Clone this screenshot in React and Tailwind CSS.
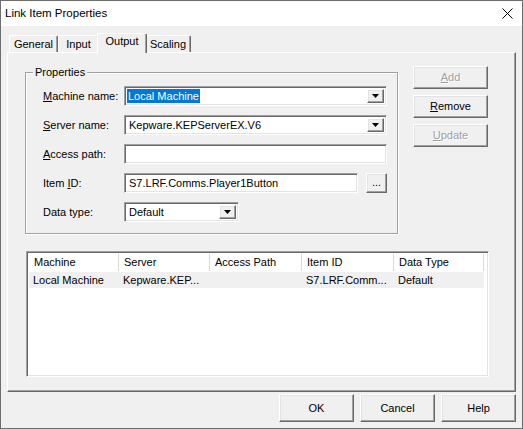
import React from 'react';

const raised =
  'bg-[#f0f0f0] border border-t-white border-l-white border-r-[#696969] border-b-[#696969] shadow-[inset_-1px_-1px_0_#a0a0a0,inset_1px_1px_0_#e3e3e3]';
const sunken =
  'bg-white border border-t-[#a0a0a0] border-l-[#a0a0a0] border-r-white border-b-white shadow-[inset_1px_1px_0_#696969,inset_-1px_-1px_0_#e3e3e3]';
const etchedText = 'text-[#a0a0a0] [text-shadow:1px_1px_0_#fff]';

const DropArrow = () => (
  <div className={`${raised} w-[17px] h-full flex items-center justify-center`}>
    <svg width="7" height="4" viewBox="0 0 7 4">
      <path d="M0 0h7L3.5 4z" fill="#000" />
    </svg>
  </div>
);

const Combo = ({ width, children }) => (
  <div className={`${sunken} ${width} h-[20px] flex items-stretch p-[2px]`}>
    <div className="flex-1 flex items-center overflow-hidden">{children}</div>
    <DropArrow />
  </div>
);

const Field = ({ label, children }) => (
  <div className="flex items-center h-[20px]">
    <div className="w-[81px]">{label}</div>
    {children}
  </div>
);

const Tab = ({ label, active, width }) =>
  active ? (
    <div
      className={`relative z-10 -mb-px -mx-[2px] ${width} h-[20px] bg-[#f0f0f0] border-t border-l border-r border-t-white border-l-white border-r-[#696969] shadow-[inset_-1px_0_0_#a0a0a0] rounded-t-[2px] flex items-start justify-center pt-[2px]`}
    >
      {label}
    </div>
  ) : (
    <div
      className={`${width} h-[17px] border-t border-l border-r border-t-white border-l-white border-r-[#696969] shadow-[inset_-1px_0_0_#a0a0a0] rounded-t-[2px] flex items-center justify-center`}
    >
      {label}
    </div>
  );

const columns = [
  { name: 'Machine', w: 'w-[90px]' },
  { name: 'Server', w: 'w-[91px]' },
  { name: 'Access Path', w: 'w-[92px]' },
  { name: 'Item ID', w: 'w-[92px]' },
  { name: 'Data Type', w: 'w-[90px]' },
];

const rows = [['Local Machine', 'Kepware.KEP...', '', 'S7.LRF.Comm...', 'Default']];

export default function App() {
  return (
    <div className="w-[523px] h-[429px] border border-[#6e6e6e] bg-[#f0f0f0] flex flex-col text-[11px] text-black font-['Liberation_Sans',Arial,sans-serif] leading-none select-none">
      {/* title bar */}
      <div className="h-[25px] bg-white flex items-center justify-between pl-[4px] pr-[9px]">
        <span className="text-[11.5px]">Link Item Properties</span>
        <svg width="11" height="11" viewBox="0 0 11 11">
          <path d="M0.5 0.5L10.5 10.5M10.5 0.5L0.5 10.5" stroke="#000" strokeWidth="1" />
        </svg>
      </div>

      <div className="pl-[6px] pt-[7px]">
        {/* tabs */}
        <div className="h-[19px] flex items-end pl-[2px]">
          <Tab label="General" width="w-[49px]" />
          <Tab label="Input" width="w-[41px]" />
          <Tab label="Output" width="w-[50px]" active />
          <Tab label="Scaling" width="w-[46px]" />
        </div>

        {/* tab page */}
        <div className="w-[509px] h-[340px] border border-t-white border-l-white border-r-[#696969] border-b-[#696969] shadow-[inset_-1px_-1px_0_#a0a0a0] pl-[17px]">
          <div className="flex items-start">
            {/* properties group */}
            <div className="relative mt-[19px] w-[373px] h-[162px] border border-[#a0a0a0] shadow-[1px_1px_0_#fff,inset_1px_1px_0_#fff] pl-[17px] pt-[13px]">
              <span className="absolute -top-[7px] left-[7px] px-[2px] bg-[#f0f0f0] leading-[13px]">Properties</span>
              <div className="flex flex-col gap-[9px]">
                <Field label={<><u>M</u>achine name:</>}>
                  <Combo width="w-[263px]">
                    <span className="bg-[#0078d7] text-white px-[1px] h-[15px] flex items-center">Local Machine</span>
                  </Combo>
                </Field>
                <Field label={<><u>S</u>erver name:</>}>
                  <Combo width="w-[263px]">
                    <span className="pl-[2px]">Kepware.KEPServerEX.V6</span>
                  </Combo>
                </Field>
                <Field label={<><u>A</u>ccess path:</>}>
                  <div className={`${sunken} w-[263px] h-[20px]`} />
                </Field>
                <Field label={<>Item <u>I</u>D:</>}>
                  <div className={`${sunken} w-[234px] h-[20px] flex items-center pl-[4px]`}>
                    S7.LRF.Comms.Player1Button
                  </div>
                  <button className={`${raised} ml-[8px] w-[21px] h-[20px] flex items-end justify-center pb-[4px]`}>...</button>
                </Field>
                <Field label="Data type:">
                  <Combo width="w-[115px]">
                    <span className="pl-[2px]">Default</span>
                  </Combo>
                </Field>
              </div>
            </div>

            {/* action buttons */}
            <div className="mt-[13px] ml-[15px] flex flex-col gap-[6px]">
              <button className={`${raised} w-[75px] h-[23px] ${etchedText}`}>
                <u>A</u>dd
              </button>
              <button className={`${raised} w-[75px] h-[23px]`}>
                <u>R</u>emove
              </button>
              <button className={`${raised} w-[75px] h-[23px] ${etchedText}`}>
                <u>U</u>pdate
              </button>
            </div>
          </div>

          {/* list view */}
          <div className={`${sunken} mt-[17px] ml-[1px] w-[463px] h-[126px] p-[2px]`}>
            <div className="flex h-[17px] bg-white">
              {columns.map(c => (
                <div key={c.name} className={`${c.w} border-r border-[#d9d9d9] flex items-center pl-[5px]`}>
                  {c.name}
                </div>
              ))}
            </div>
            {rows.map((r, i) => (
              <div key={i} className="flex h-[16px] w-[455px] bg-[#f0f0f0] mt-[1px]">
                {r.map((cell, j) => (
                  <div key={j} className={`${columns[j].w} flex items-center pl-[4px] whitespace-nowrap`}>
                    {cell}
                  </div>
                ))}
              </div>
            ))}
          </div>
        </div>

        {/* dialog buttons */}
        <div className="w-[509px] mt-[2px] flex justify-end gap-[6px]">
          <button className={`${raised} w-[75px] h-[28px]`}>OK</button>
          <button className={`${raised} w-[75px] h-[28px]`}>Cancel</button>
          <button className={`${raised} w-[75px] h-[28px]`}>Help</button>
        </div>
      </div>
    </div>
  );
}
